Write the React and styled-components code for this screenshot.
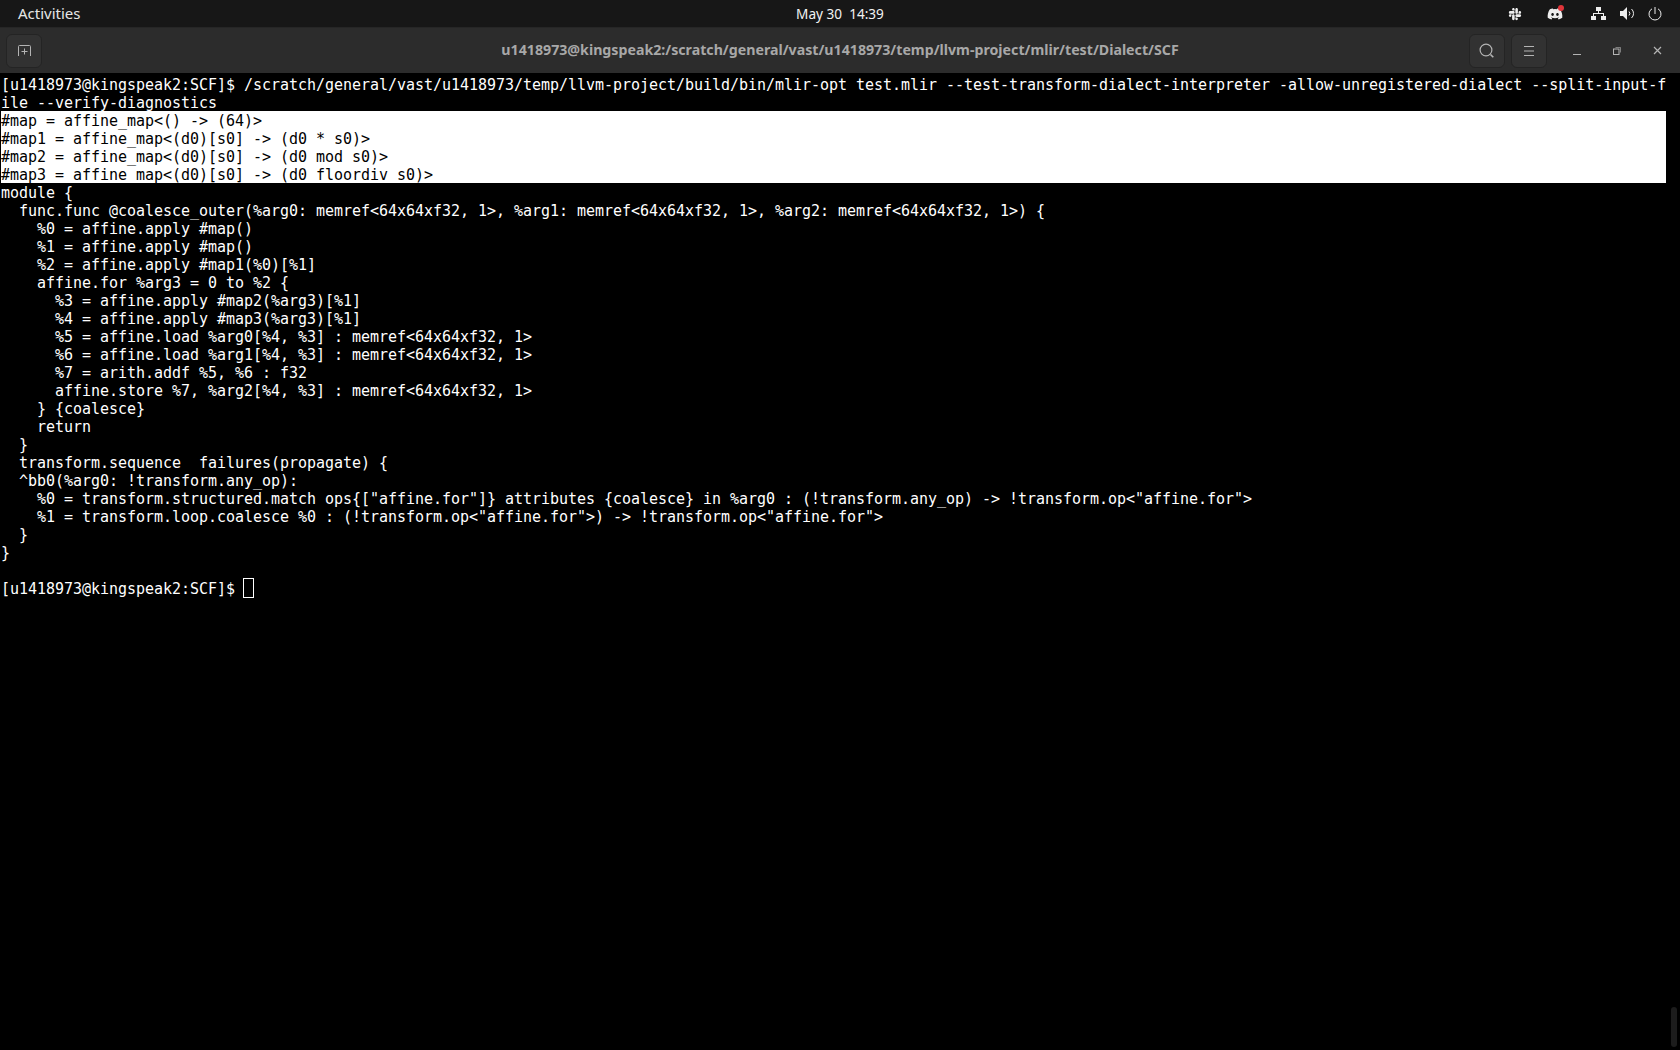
import React from 'react'
import styled, { createGlobalStyle } from 'styled-components'
import { FaSlack, FaDiscord } from 'react-icons/fa'

const GlobalStyle = createGlobalStyle`
  html, body {
    margin: 0;
    padding: 0;
    background: #000;
    overflow: hidden;
  }
`

const Screen = styled.div`
  width: 1680px;
  height: 1050px;
  display: flex;
  flex-direction: column;
  background: #000;
`

const TopBar = styled.div`
  height: 27px;
  flex: none;
  display: grid;
  grid-template-columns: 1fr auto 1fr;
  align-items: center;
  background: #171717;
  color: #e6e6e6;
  font-family: "Noto Sans", sans-serif;
  font-size: 15px;
`

const Activities = styled.div`
  padding: 0 0 2px 18px;
`

const Clock = styled.div`
  font-size: 13.6px;
  padding-bottom: 1px;
  color: #f2f2f2;
`

const Tray = styled.div`
  display: flex;
  justify-content: flex-end;
  align-items: center;
  padding-right: 10px;
  color: #eee;
`

const TraySlot = styled.div`
  width: ${p => p.$w}px;
  display: flex;
  justify-content: center;
  position: relative;
`

const Badge = styled.span`
  position: absolute;
  top: -1px;
  right: 18px;
  width: 6px;
  height: 6px;
  border-radius: 50%;
  background: #e0353a;
`

const HeaderBar = styled.div`
  height: 46px;
  flex: none;
  display: flex;
  align-items: center;
  padding: 0 3px 0 6px;
  background: #2c2c2c;
  border-top: 1px solid #262626;
  box-sizing: border-box;
`

const HeaderButton = styled.div`
  width: 36px;
  height: 34px;
  flex: none;
  display: flex;
  align-items: center;
  justify-content: center;
  box-sizing: border-box;
  margin-right: ${p => p.$mr || 0}px;
  background: #323232;
  border: 1px solid #242424;
  border-radius: 6px;
  color: #b4b4b4;
`

const Title = styled.div`
  flex: 1;
  text-align: center;
  color: #a8a8a8;
  font-family: "Noto Sans", sans-serif;
  font-weight: 700;
  font-size: 14.2px;
  padding: 0 0 2px 169px;
`

const WindowControl = styled.div`
  width: 40px;
  display: flex;
  justify-content: center;
  color: #b4b4b4;
`

const Terminal = styled.div`
  flex: 1;
  position: relative;
  padding: 2px 0 0 1px;
  background: #000;
  color: #fff;
  font-family: "DejaVu Sans Mono", monospace;
  font-size: 15px;
  letter-spacing: -0.03px;
`

const Line = styled.div`
  height: 18px;
  line-height: 20px;
  width: 1665px;
  white-space: pre;
  background: ${p => (p.$selected ? '#fff' : 'transparent')};
  color: ${p => (p.$selected ? '#000' : '#fff')};
`

const Cursor = styled.span`
  display: inline-block;
  vertical-align: top;
  width: 11px;
  height: 20px;
  margin: -1px 0 0 -1px;
  box-sizing: border-box;
  border: 1px solid #fff;
`

const ScrollThumb = styled.div`
  position: absolute;
  right: 3px;
  bottom: 3px;
  width: 6px;
  height: 40px;
  border-radius: 3px;
  background: #1c1c1c;
`

const NewTabIcon = () => (
  <svg width="15" height="12" viewBox="0 0 15 12" fill="none" stroke="currentColor" strokeWidth="1">
    <path d="M1.5 11V1.5a1 1 0 0 1 1-1h10a1 1 0 0 1 1 1V11" />
    <path d="M7.5 3.5v6M4.5 6.5h6" />
  </svg>
)

const SearchIcon = () => (
  <svg width="16" height="16" viewBox="0 0 16 16" fill="none" stroke="currentColor" strokeWidth="1.2">
    <circle cx="7" cy="7" r="5.9" />
    <path d="M11.5 11.5l2.8 2.8" strokeWidth="1.6" />
  </svg>
)

const MenuIcon = () => (
  <svg width="10" height="10" viewBox="0 0 10 10" stroke="currentColor" strokeWidth="1">
    <path d="M0 .5h10M0 5h10M0 9.5h10" />
  </svg>
)

const MinimizeIcon = () => (
  <svg width="8" height="8" viewBox="0 0 8 8" stroke="currentColor" strokeWidth="1">
    <path d="M0 7.5h8" />
  </svg>
)

const RestoreIcon = () => (
  <svg width="8" height="8" viewBox="0 0 8 8" fill="none" stroke="currentColor" strokeWidth="1">
    <rect x="0.5" y="2" width="5.5" height="5.5" />
    <path d="M2.5 0.5h5v5" strokeOpacity="0.6" />
  </svg>
)

const CloseIcon = () => (
  <svg width="9" height="9" viewBox="0 0 9 9" stroke="currentColor" strokeWidth="1.2">
    <path d="M1 1l7 7M8 1l-7 7" />
  </svg>
)

const NetworkIcon = () => (
  <svg width="15" height="13" viewBox="0 0 15 13" fill="currentColor">
    <rect x="5" y="0" width="5" height="4" />
    <rect x="0" y="9" width="5" height="4" />
    <rect x="10" y="9" width="5" height="4" />
    <path d="M7 4h1v2h5v3h-1V7H3v2H2V6h5z" />
  </svg>
)

const VolumeIcon = () => (
  <svg width="15" height="13" viewBox="0 0 15 13" fill="none">
    <path d="M0 4h3l4-4v13L3 9H0z" fill="currentColor" />
    <path d="M9 4.5a3 3 0 0 1 0 4" stroke="currentColor" strokeWidth="1" />
    <path d="M11.5 2a6 6 0 0 1 0 9" stroke="currentColor" strokeWidth="1" />
  </svg>
)

const PowerIcon = () => (
  <svg width="14" height="14" viewBox="0 0 14 14" fill="none" stroke="currentColor" strokeWidth="1">
    <path d="M4 1.8a6 6 0 1 0 6 0" />
    <path d="M7 0v7" />
  </svg>
)

const prompt = '[u1418973@kingspeak2:SCF]$ '

const lines = [
  { text: prompt + '/scratch/general/vast/u1418973/temp/llvm-project/build/bin/mlir-opt test.mlir --test-transform-dialect-interpreter -allow-unregistered-dialect --split-input-f' },
  { text: 'ile --verify-diagnostics' },
  { text: '#map = affine_map<() -> (64)>', selected: true },
  { text: '#map1 = affine_map<(d0)[s0] -> (d0 * s0)>', selected: true },
  { text: '#map2 = affine_map<(d0)[s0] -> (d0 mod s0)>', selected: true },
  { text: '#map3 = affine_map<(d0)[s0] -> (d0 floordiv s0)>', selected: true },
  { text: 'module {' },
  { text: '  func.func @coalesce_outer(%arg0: memref<64x64xf32, 1>, %arg1: memref<64x64xf32, 1>, %arg2: memref<64x64xf32, 1>) {' },
  { text: '    %0 = affine.apply #map()' },
  { text: '    %1 = affine.apply #map()' },
  { text: '    %2 = affine.apply #map1(%0)[%1]' },
  { text: '    affine.for %arg3 = 0 to %2 {' },
  { text: '      %3 = affine.apply #map2(%arg3)[%1]' },
  { text: '      %4 = affine.apply #map3(%arg3)[%1]' },
  { text: '      %5 = affine.load %arg0[%4, %3] : memref<64x64xf32, 1>' },
  { text: '      %6 = affine.load %arg1[%4, %3] : memref<64x64xf32, 1>' },
  { text: '      %7 = arith.addf %5, %6 : f32' },
  { text: '      affine.store %7, %arg2[%4, %3] : memref<64x64xf32, 1>' },
  { text: '    } {coalesce}' },
  { text: '    return' },
  { text: '  }' },
  { text: '  transform.sequence  failures(propagate) {' },
  { text: '  ^bb0(%arg0: !transform.any_op):' },
  { text: '    %0 = transform.structured.match ops{["affine.for"]} attributes {coalesce} in %arg0 : (!transform.any_op) -> !transform.op<"affine.for">' },
  { text: '    %1 = transform.loop.coalesce %0 : (!transform.op<"affine.for">) -> !transform.op<"affine.for">' },
  { text: '  }' },
  { text: '}' },
  { text: '' },
]

const App = () => (
  <Screen>
    <GlobalStyle />
    <TopBar>
      <Activities>Activities</Activities>
      <Clock>May 30&nbsp; 14:39</Clock>
      <Tray>
        <TraySlot $w={25}><FaSlack size={14} /></TraySlot>
        <TraySlot $w={55}>
          <FaDiscord size={16} />
          <Badge />
        </TraySlot>
        <TraySlot $w={32}><NetworkIcon /></TraySlot>
        <TraySlot $w={26}><VolumeIcon /></TraySlot>
        <TraySlot $w={30}><PowerIcon /></TraySlot>
      </Tray>
    </TopBar>
    <HeaderBar>
      <HeaderButton><NewTabIcon /></HeaderButton>
      <Title>u1418973@kingspeak2:/scratch/general/vast/u1418973/temp/llvm-project/mlir/test/Dialect/SCF</Title>
      <HeaderButton $mr={6}><SearchIcon /></HeaderButton>
      <HeaderButton $mr={10}><MenuIcon /></HeaderButton>
      <WindowControl><MinimizeIcon /></WindowControl>
      <WindowControl><RestoreIcon /></WindowControl>
      <WindowControl><CloseIcon /></WindowControl>
    </HeaderBar>
    <Terminal>
      {lines.map((line, i) => (
        <Line key={i} $selected={line.selected}>{line.text}</Line>
      ))}
      <Line>{prompt}<Cursor /></Line>
      <ScrollThumb />
    </Terminal>
  </Screen>
)

export default App
